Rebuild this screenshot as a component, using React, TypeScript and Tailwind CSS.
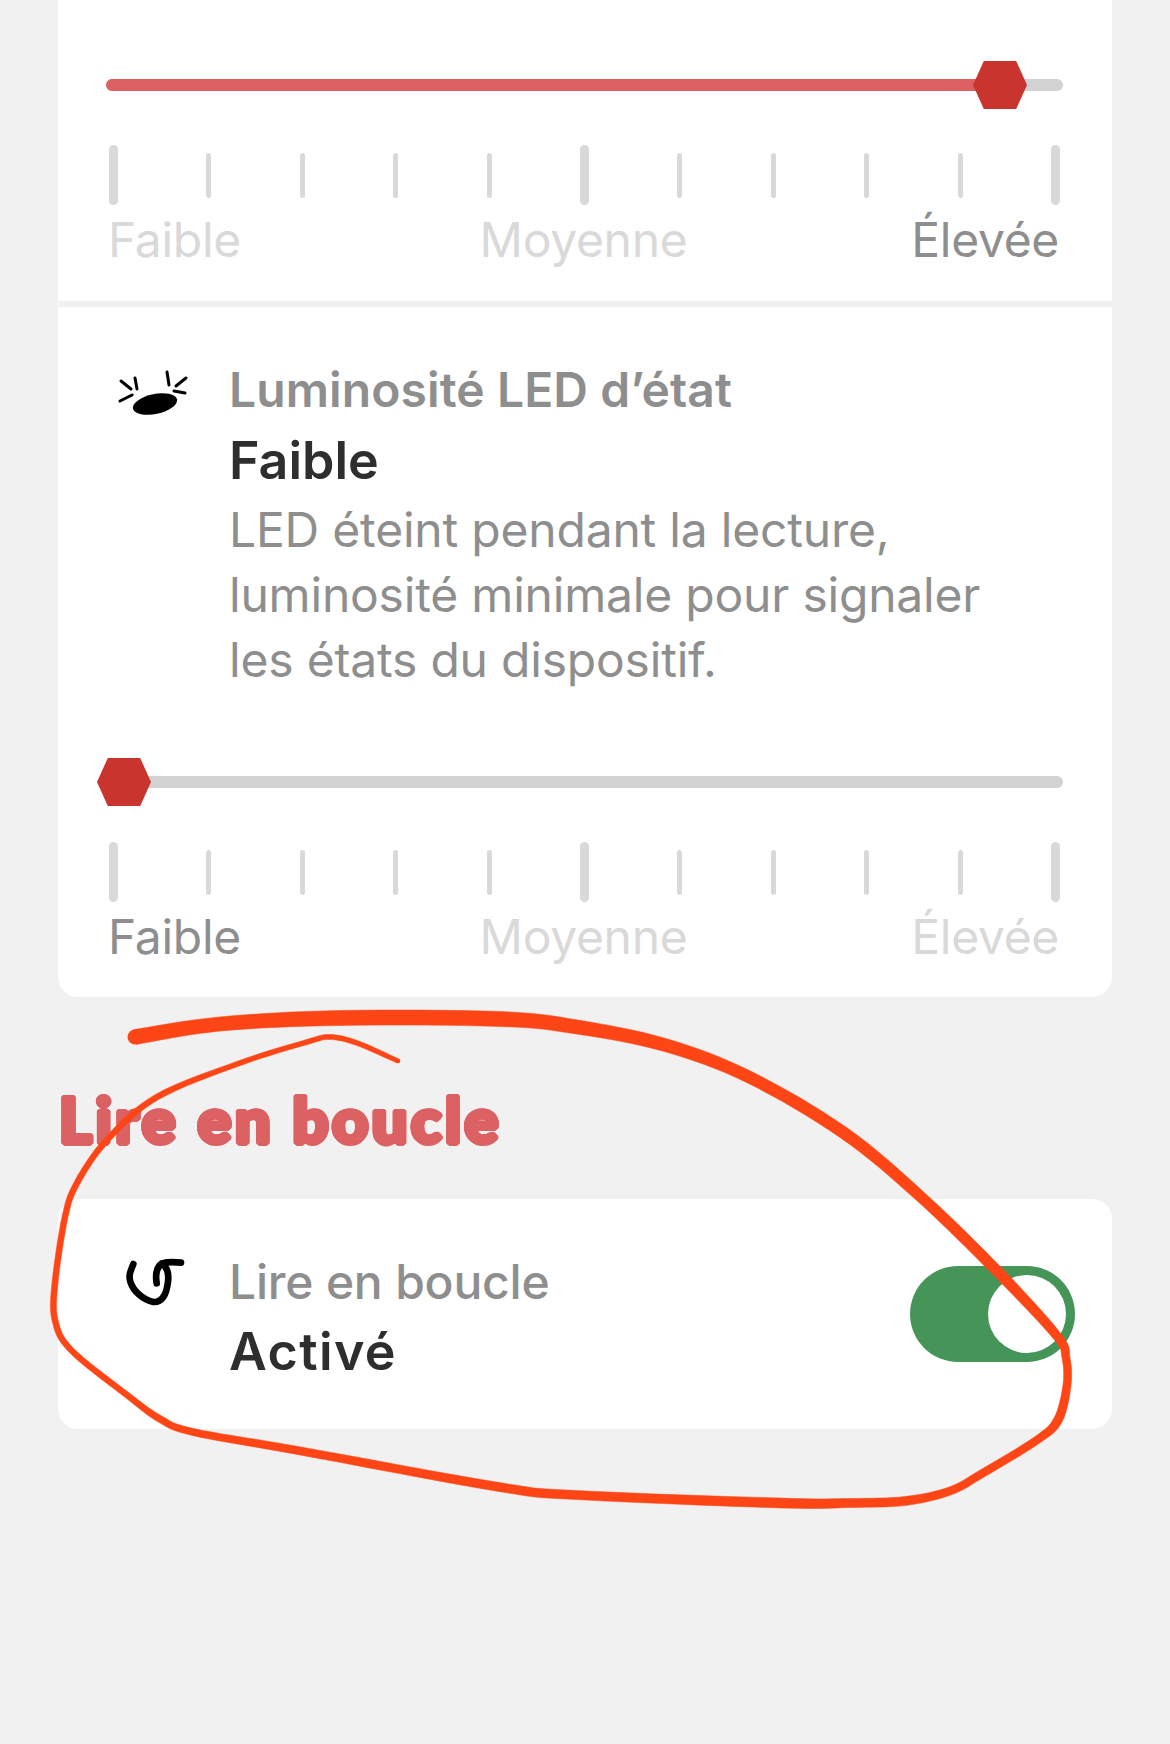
import React from "react";

type P = [number, number, number];
const stroke: P[] = [
  [135,1037,15],[220,1024,14],[340,1018,15],[500,1019,15],[577,1027,14],[665,1045,13],[749,1077,12],[844,1133,12],[921,1197,11],[999,1273,11],[1057,1336,9],[1066,1358,8],[1067,1385,8],[1058,1420,9],[1037,1440,8],[983,1473,8],[950,1491,8],[905,1501,9],[850,1503,9],[780,1503,10],[576,1495,9],[499,1487,9],[295,1450,8],[193,1432,7],[160,1419,7],[127,1395,6],[71,1350,6],[55,1320,6],[55,1283,6],[65,1217,6],[77,1183,6],[107,1140,6],[157,1097,6],[240,1063,5],[307,1042,5],[330,1037,5],[357,1043,5],[398,1061,4.5],
];

function taperedPath(pts: P[]): string {
  const s: P[] = [];
  for (let i = 0; i < pts.length - 1; i++) {
    const a = pts[Math.max(0, i - 1)], b = pts[i], c = pts[i + 1], d = pts[Math.min(pts.length - 1, i + 2)];
    for (let k = 0; k < 8; k++) {
      const t = k / 8;
      const f = (j: number) => 0.5 * (2 * b[j] + (c[j] - a[j]) * t + (2 * a[j] - 5 * b[j] + 4 * c[j] - d[j]) * t * t + (3 * b[j] - a[j] - 3 * c[j] + d[j]) * t * t * t);
      s.push([f(0), f(1), b[2] + (c[2] - b[2]) * t]);
    }
  }
  s.push(pts[pts.length - 1]);
  const l: string[] = [], r: string[] = [];
  s.forEach((p, i) => {
    const q = s[Math.min(i + 1, s.length - 1)], o = s[Math.max(i - 1, 0)];
    const dx = q[0] - o[0], dy = q[1] - o[1], n = Math.hypot(dx, dy) || 1;
    const nx = (-dy / n) * p[2] / 2, ny = (dx / n) * p[2] / 2;
    l.push(`${(p[0] + nx).toFixed(1)} ${(p[1] + ny).toFixed(1)}`);
    r.push(`${(p[0] - nx).toFixed(1)} ${(p[1] - ny).toFixed(1)}`);
  });
  return `M${l.join("L")}L${r.reverse().join("L")}Z`;
}

function Slider({ pos, fill, active }: { pos: "low" | "high"; fill: boolean; active: number }) {
  const big = [0, 5, 10];
  const labels = ["Faible", "Moyenne", "Élevée"];
  return (
    <div className="pl-[48px] pr-[49px]">
      <div className="relative h-[48px] flex items-center">
        <div className="w-full h-[12px] rounded-full bg-[#d2d2d2] overflow-hidden">
          {fill && <div className="h-full w-[900px] bg-[#dc6163]" />}
        </div>
        <div
          className={`absolute top-0 h-[48px] w-[54px] bg-[#c9352e] [clip-path:polygon(20%_0,80%_0,100%_50%,80%_100%,20%_100%,0_50%)] ${
            pos === "low" ? "left-[-9px]" : "left-[867px]"
          }`}
        />
      </div>
      <div className="mt-[36px] px-[3px] h-[60px] flex justify-between items-start">
        {Array.from({ length: 11 }).map((_, i) =>
          big.includes(i) ? (
            <div key={i} className="w-[9px] h-[60px] rounded-full bg-[#d9d9d9]" />
          ) : (
            <div key={i} className="w-[5px] h-[45px] rounded-full bg-[#d9d9d9] mt-[8px]" />
          )
        )}
      </div>
      <div className="mt-[5px] pl-[2px] pr-[4px] grid grid-cols-3 text-[48px] leading-[60px] tracking-[-0.3px]">
        {labels.map((t, i) => (
          <div
            key={t}
            className={`${i === active ? "text-[#8e8e8e]" : "text-[#d9d9d9]"} ${
              i === 0 ? "text-left" : i === 1 ? "text-center" : "text-right"
            }`}
          >
            {t}
          </div>
        ))}
      </div>
    </div>
  );
}

function LedIcon() {
  return (
    <svg viewBox="0 0 120 80" className="w-[120px] h-[80px] shrink-0 text-black">
      <ellipse cx="55" cy="54" rx="22.5" ry="10" transform="rotate(-12 55 54)" fill="currentColor" />
      <g stroke="currentColor" strokeWidth="3" strokeLinecap="round" fill="none">
        <path d="M21 31L31 39" />
        <path d="M35 28L37 39" />
        <path d="M20 51L32 45" />
        <path d="M67 22L69 35" />
        <path d="M86 28L76 36" />
        <path d="M74 41L85 43" />
      </g>
    </svg>
  );
}

function LoopIcon() {
  return (
    <svg viewBox="0 0 360 240" className="w-[120px] h-[80px] shrink-0 text-black">
      <path
        d="M100 72C92 92 84 108 92 128C100 152 128 180 160 186C188 188 200 160 204 125C207 100 200 80 186 72"
        fill="none"
        stroke="currentColor"
        strokeWidth="20"
        strokeLinecap="round"
      />
      <path
        d="M170 130C166 105 168 82 186 70C200 66 225 66 243 68"
        fill="none"
        stroke="currentColor"
        strokeWidth="20"
        strokeLinecap="round"
      />
    </svg>
  );
}

export default function App() {
  return (
    <div
      className="relative w-[1170px] h-[1744px] bg-[#f1f1f1] px-[58px] overflow-hidden"
      style={{ fontFamily: "Inter, 'Noto Sans', sans-serif" }}
    >
      <div className="flex flex-col gap-[6px]">
        <section className="bg-white pt-[61px] pb-[31px]">
          <Slider pos="high" fill active={2} />
        </section>
        <section className="bg-white rounded-b-[20px] pt-[43px] pb-[30px]">
          <div className="flex items-start pl-[42px]">
            <LedIcon />
            <div className="ml-[9px] pt-[5px]">
              <div className="text-[48px] leading-[70px] font-semibold text-[#8e8e8e] tracking-[0.1px]">Luminosité LED d’état</div>
              <div className="text-[52px] leading-[70px] font-semibold text-[#2e2e2e] mt-[1px]">Faible</div>
              <div className="text-[48px] leading-[65px] text-[#8e8e8e] tracking-[-0.2px] mt-[1px]">
                LED éteint pendant la lecture,
                <br />
                luminosité minimale pour signaler
                <br />
                les états du dispositif.
              </div>
            </div>
          </div>
          <div className="mt-[66px]">
            <Slider pos="low" fill={false} active={0} />
          </div>
        </section>
      </div>
      <h2
        className="pt-[82px] pb-[40px] pl-[1px] text-[63px] leading-[80px] font-black text-[#dc6163] tracking-[3.5px] [text-shadow:2.5px_0_#dc6163,2.2px_1.2px_#dc6163,1.2px_2.2px_#dc6163,0_2.5px_#dc6163,-1.2px_2.2px_#dc6163,-2.2px_1.2px_#dc6163,-2.5px_0_#dc6163,-2.2px_-1.2px_#dc6163,-1.2px_-2.2px_#dc6163,0_-2.5px_#dc6163,1.2px_-2.2px_#dc6163,2.2px_-1.2px_#dc6163]"
        style={{ fontFamily: "Lato, Inter, sans-serif" }}
      >
        Lire en boucle
      </h2>
      <section className="bg-white rounded-[20px] h-[230px] flex items-start pl-[42px] pr-[37px] pt-[41px]">
        <LoopIcon />
        <div className="ml-[9px] pt-[7px]">
          <div className="text-[48px] leading-[70px] font-medium text-[#8e8e8e] tracking-[-0.2px]">Lire en boucle</div>
          <div className="text-[52px] leading-[70px] font-semibold text-[#2e2e2e] tracking-[1.4px]">Activé</div>
        </div>
        <div className="ml-auto mt-[26px] w-[165px] h-[96px] rounded-full bg-[#459559] flex items-center justify-end pr-[9px]">
          <div className="w-[78px] h-[78px] rounded-full bg-white" />
        </div>
      </section>
      <svg viewBox="0 0 1170 1744" className="absolute inset-0 w-[1170px] h-[1744px] pointer-events-none">
        <path d={taperedPath(stroke)} fill="#fd4516" stroke="#fd4516" strokeWidth="0.5" strokeLinejoin="round" />
        <circle cx="135" cy="1037" r="7.5" fill="#fd4516" />
        <circle cx="398" cy="1061" r="2.3" fill="#fd4516" />
      </svg>
    </div>
  );
}
